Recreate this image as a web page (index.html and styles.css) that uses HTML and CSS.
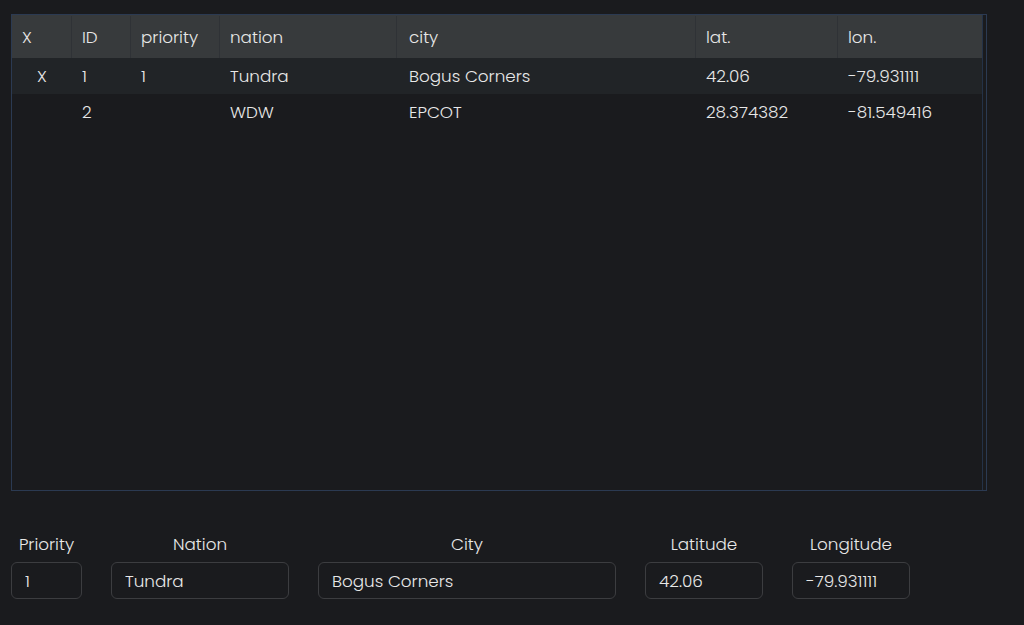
FILE: index.html
```html
<!DOCTYPE html>
<html lang="en">

<head>
    <meta charset="UTF-8">
    <meta name="viewport" content="width=device-width, initial-scale=1.0">
    <title>Locations</title>
    <link rel="stylesheet" href="styles.css">
</head>

<body>
    <div class="grid-wrap">
        <div class="grid">
            <div class="grid-row grid-head">
                <div class="cell c-x">X</div>
                <div class="cell c-id">ID</div>
                <div class="cell c-pri">priority</div>
                <div class="cell c-nation">nation</div>
                <div class="cell c-city">city</div>
                <div class="cell c-lat">lat.</div>
                <div class="cell c-lon">lon.</div>
            </div>
            <div class="grid-row selected">
                <div class="cell c-x center">X</div>
                <div class="cell c-id">1</div>
                <div class="cell c-pri">1</div>
                <div class="cell c-nation">Tundra</div>
                <div class="cell c-city">Bogus Corners</div>
                <div class="cell c-lat">42.06</div>
                <div class="cell c-lon">-79.931111</div>
            </div>
            <div class="grid-row">
                <div class="cell c-x center"></div>
                <div class="cell c-id">2</div>
                <div class="cell c-pri"></div>
                <div class="cell c-nation">WDW</div>
                <div class="cell c-city">EPCOT</div>
                <div class="cell c-lat">28.374382</div>
                <div class="cell c-lon">-81.549416</div>
            </div>
        </div>
        <div class="scroll-track"></div>
    </div>

    <form class="editor">
        <label class="field f-pri">
            <span>Priority</span>
            <input type="text" value="1">
        </label>
        <label class="field f-nation">
            <span>Nation</span>
            <input type="text" value="Tundra">
        </label>
        <label class="field f-city">
            <span>City</span>
            <input type="text" value="Bogus Corners">
        </label>
        <label class="field f-lat">
            <span>Latitude</span>
            <input type="text" value="42.06">
        </label>
        <label class="field f-lon">
            <span>Longitude</span>
            <input type="text" value="-79.931111">
        </label>
    </form>
</body>

</html>
```

FILE: styles.css
```css
* {
    margin: 0;
    padding: 0;
    box-sizing: border-box;
}

body {
    background-color: #1a1b1e;
    color: #e8e8e8;
    font-family: "Poppins", "Inter", "Noto Sans", sans-serif;
    font-weight: 300;
    font-size: 16.8px;
    padding: 14px 0 0 11px;
}

.grid-wrap {
    display: flex;
    width: 976px;
    height: 477px;
    border: 1px solid #2b3a52;
    border-right: none;
}

.grid {
    flex: 1;
}

.scroll-track {
    width: 5px;
    border-left: 1px solid #243247;
    border-right: 1px solid #2b3a52;
}

.grid-row {
    display: flex;
    height: 36px;
    align-items: center;
}

.grid-head {
    height: 43px;
    padding-top: 1px;
    background-color: #373a3c;
}

.grid-head .cell {
    border-right: 1px solid #2f3236;
}

.grid-head .cell:last-child {
    border-right: none;
}

.selected {
    background-color: #212427;
}

.cell {
    height: 100%;
    display: flex;
    align-items: center;
    padding-left: 10px;
    white-space: nowrap;
}

.center {
    justify-content: center;
    padding-left: 0;
}

.c-x { width: 60px; }
.c-id { width: 59px; }
.c-pri { width: 89px; }
.c-nation { width: 177px; }
.c-city { width: 299px; padding-left: 12px; }
.c-lat { width: 142px; }
.c-lon { flex: 1; }

.editor {
    display: flex;
    gap: 29px;
    margin-top: 43px;
}

.field {
    display: flex;
    flex-direction: column;
    align-items: center;
    gap: 7px;
}

.field span {
    line-height: 21px;
}

.field input {
    height: 37px;
    background: transparent;
    border: 1px solid #3c3d40;
    border-radius: 6px;
    color: #e8e8e8;
    font: inherit;
    padding-left: 13px;
    outline: none;
}

.f-pri input { width: 71px; }
.f-nation input { width: 178px; }
.f-city input { width: 298px; }
.f-lat input { width: 118px; }
.f-lon input { width: 118px; }
```
